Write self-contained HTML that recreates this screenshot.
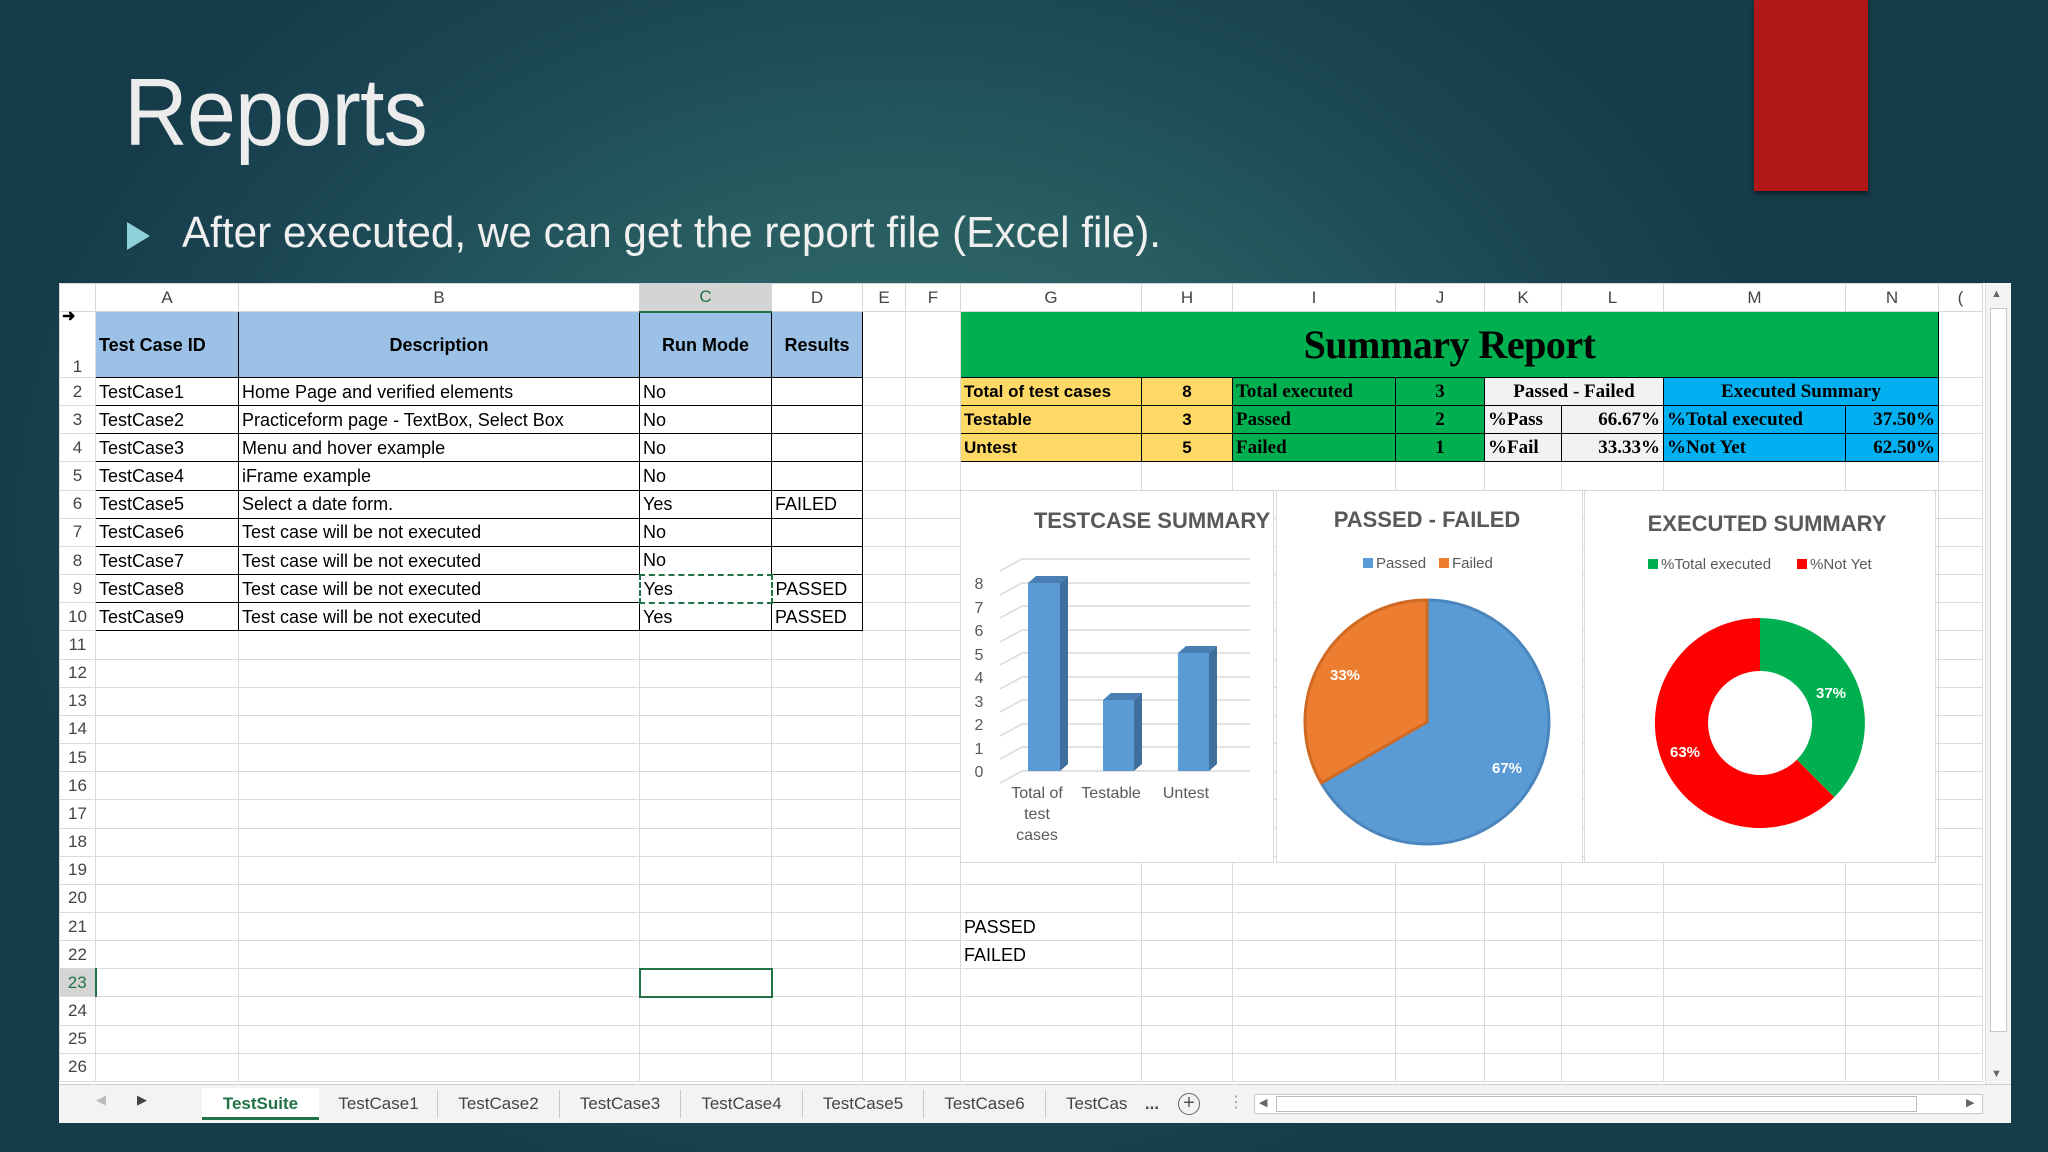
<!DOCTYPE html>
<html><head><meta charset="utf-8"><style>
*{margin:0;padding:0;box-sizing:border-box}
body{width:2048px;height:1152px;overflow:hidden;position:relative;font-family:"Liberation Sans",sans-serif;
background:radial-gradient(ellipse 900px 700px at 900px 520px,#33716c 0%,#285d61 45%,#1b4553 80%,#163c4a 100%);}
.abs{position:absolute}
#title{left:124px;top:58px;font-size:96px;color:#ececec;letter-spacing:-1px;transform:scaleX(.92);transform-origin:left}
#bul{left:182px;top:208px;font-size:44px;color:#f0f0f0;white-space:nowrap;transform:scaleX(.96);transform-origin:left}
#tri{left:127px;top:222px;width:0;height:0;border-left:23px solid #8dd0d8;border-top:14px solid transparent;border-bottom:14px solid transparent}
#red{left:1754px;top:0;width:114px;height:191px;background:#b11717;box-shadow:0 3px 4px rgba(0,0,0,.5)}
#sheet{left:59px;top:283px;width:1952px;height:840px;background:#fff}
table{border-collapse:collapse;table-layout:fixed;position:absolute;left:59px;top:283px}
td{border:1px solid #dadada;height:28.16px;font-size:18px;color:#000;white-space:nowrap;overflow:hidden;padding:0 3px;line-height:20px}
tr.h td{height:28px;color:#444;text-align:center;font-size:17px;background:#fff;border-color:#d6d6d6}
td.rn{color:#444;text-align:center;font-size:17px;padding:0}
tr.r1 td{height:66px}
.hd{background:#9bc2e6;font-weight:bold;border:1.5px solid #000!important}
.dt{border:1.5px solid #000!important}
.y{background:#ffd966;font-weight:bold;border:1.5px solid #000!important;font-size:17px}
.g{background:#00b050;border:1.5px solid #000!important;font-family:"Liberation Serif",serif;font-weight:bold;font-size:19px}
.gr{background:#f2f2f2;border:1.5px solid #000!important;font-family:"Liberation Serif",serif;font-weight:bold;font-size:19px}
.b{background:#00b0f0;border:1.5px solid #000!important;font-family:"Liberation Serif",serif;font-weight:bold;font-size:19px}
.c{text-align:center}.r{text-align:right}
.chart{position:absolute;background:#fff;border:1px solid #d9d9d9;top:490px;height:373px}
.tab{position:absolute;top:1088px;height:32px;font-size:17px;color:#444;line-height:32px;text-align:center}
.sep{position:absolute;top:1090px;width:1px;height:28px;background:#c8c8c8}
</style></head><body>
<div id="title" class="abs">Reports</div>
<div id="tri" class="abs"></div>
<div id="bul" class="abs">After executed, we can get the report file (Excel file).</div>
<div id="red" class="abs"></div>
<div id="sheet" class="abs"></div>
<table>
<colgroup><col style="width:36px"><col style="width:143px"><col style="width:401px"><col style="width:132px"><col style="width:91px"><col style="width:43px"><col style="width:55px"><col style="width:181px"><col style="width:91px"><col style="width:163px"><col style="width:89px"><col style="width:77px"><col style="width:102px"><col style="width:182px"><col style="width:93px"><col style="width:44px"></colgroup>
<tr class="h"><td></td><td>A</td><td>B</td><td style="background:#d4d4d4;border-bottom:2px solid #217346;color:#217346">C</td><td>D</td><td>E</td><td>F</td><td>G</td><td>H</td><td>I</td><td>J</td><td>K</td><td>L</td><td>M</td><td>N</td><td>(</td></tr>
<tr class="r1"><td class="rn" style="vertical-align:bottom">1</td><td class="hd">Test Case ID</td><td class="hd c">Description</td><td class="hd c">Run Mode</td><td class="hd c">Results</td><td></td><td></td><td colspan="8" class="g c" style="font-size:40px;letter-spacing:-.5px">Summary Report</td><td></td></tr>
<tr><td class="rn">2</td><td class="dt">TestCase1</td><td class="dt">Home Page and verified elements</td><td class="dt">No</td><td class="dt"></td><td></td><td></td><td class="y">Total of test cases</td><td class="y c">8</td><td class="g">Total executed</td><td class="g c">3</td><td colspan="2" class="gr c">Passed - Failed</td><td colspan="2" class="b c">Executed Summary</td><td></td></tr>
<tr><td class="rn">3</td><td class="dt">TestCase2</td><td class="dt">Practiceform page - TextBox, Select Box</td><td class="dt">No</td><td class="dt"></td><td></td><td></td><td class="y">Testable</td><td class="y c">3</td><td class="g">Passed</td><td class="g c">2</td><td class="gr">%Pass</td><td class="gr r">66.67%</td><td class="b">%Total executed</td><td class="b r">37.50%</td><td></td></tr>
<tr><td class="rn">4</td><td class="dt">TestCase3</td><td class="dt">Menu and hover example</td><td class="dt">No</td><td class="dt"></td><td></td><td></td><td class="y">Untest</td><td class="y c">5</td><td class="g">Failed</td><td class="g c">1</td><td class="gr">%Fail</td><td class="gr r">33.33%</td><td class="b">%Not Yet</td><td class="b r">62.50%</td><td></td></tr>
<tr><td class="rn">5</td><td class="dt">TestCase4</td><td class="dt">iFrame example</td><td class="dt">No</td><td class="dt"></td><td></td><td></td><td></td><td></td><td></td><td></td><td></td><td></td><td></td><td></td><td></td></tr>
<tr><td class="rn">6</td><td class="dt">TestCase5</td><td class="dt">Select a date form.</td><td class="dt">Yes</td><td class="dt">FAILED</td><td></td><td></td><td></td><td></td><td></td><td></td><td></td><td></td><td></td><td></td><td></td></tr>
<tr><td class="rn">7</td><td class="dt">TestCase6</td><td class="dt">Test case will be not executed</td><td class="dt">No</td><td class="dt"></td><td></td><td></td><td></td><td></td><td></td><td></td><td></td><td></td><td></td><td></td><td></td></tr>
<tr><td class="rn">8</td><td class="dt">TestCase7</td><td class="dt">Test case will be not executed</td><td class="dt">No</td><td class="dt"></td><td></td><td></td><td></td><td></td><td></td><td></td><td></td><td></td><td></td><td></td><td></td></tr>
<tr><td class="rn">9</td><td class="dt">TestCase8</td><td class="dt">Test case will be not executed</td><td class="dt" style="border:2px dashed #217346!important">Yes</td><td class="dt">PASSED</td><td></td><td></td><td></td><td></td><td></td><td></td><td></td><td></td><td></td><td></td><td></td></tr>
<tr><td class="rn">10</td><td class="dt">TestCase9</td><td class="dt">Test case will be not executed</td><td class="dt">Yes</td><td class="dt">PASSED</td><td></td><td></td><td></td><td></td><td></td><td></td><td></td><td></td><td></td><td></td><td></td></tr>
<tr><td class="rn">11</td><td></td><td></td><td></td><td></td><td></td><td></td><td></td><td></td><td></td><td></td><td></td><td></td><td></td><td></td><td></td></tr>
<tr><td class="rn">12</td><td></td><td></td><td></td><td></td><td></td><td></td><td></td><td></td><td></td><td></td><td></td><td></td><td></td><td></td><td></td></tr>
<tr><td class="rn">13</td><td></td><td></td><td></td><td></td><td></td><td></td><td></td><td></td><td></td><td></td><td></td><td></td><td></td><td></td><td></td></tr>
<tr><td class="rn">14</td><td></td><td></td><td></td><td></td><td></td><td></td><td></td><td></td><td></td><td></td><td></td><td></td><td></td><td></td><td></td></tr>
<tr><td class="rn">15</td><td></td><td></td><td></td><td></td><td></td><td></td><td></td><td></td><td></td><td></td><td></td><td></td><td></td><td></td><td></td></tr>
<tr><td class="rn">16</td><td></td><td></td><td></td><td></td><td></td><td></td><td></td><td></td><td></td><td></td><td></td><td></td><td></td><td></td><td></td></tr>
<tr><td class="rn">17</td><td></td><td></td><td></td><td></td><td></td><td></td><td></td><td></td><td></td><td></td><td></td><td></td><td></td><td></td><td></td></tr>
<tr><td class="rn">18</td><td></td><td></td><td></td><td></td><td></td><td></td><td></td><td></td><td></td><td></td><td></td><td></td><td></td><td></td><td></td></tr>
<tr><td class="rn">19</td><td></td><td></td><td></td><td></td><td></td><td></td><td></td><td></td><td></td><td></td><td></td><td></td><td></td><td></td><td></td></tr>
<tr><td class="rn">20</td><td></td><td></td><td></td><td></td><td></td><td></td><td></td><td></td><td></td><td></td><td></td><td></td><td></td><td></td><td></td></tr>
<tr><td class="rn">21</td><td></td><td></td><td></td><td></td><td></td><td></td><td>PASSED</td><td></td><td></td><td></td><td></td><td></td><td></td><td></td><td></td></tr>
<tr><td class="rn">22</td><td></td><td></td><td></td><td></td><td></td><td></td><td>FAILED</td><td></td><td></td><td></td><td></td><td></td><td></td><td></td><td></td></tr>
<tr><td class="rn" style="background:#d4d4d4;color:#217346;border-right:2px solid #217346">23</td><td></td><td></td><td style="border:2.5px solid #217346"></td><td></td><td></td><td></td><td></td><td></td><td></td><td></td><td></td><td></td><td></td><td></td><td></td></tr>
<tr><td class="rn">24</td><td></td><td></td><td></td><td></td><td></td><td></td><td></td><td></td><td></td><td></td><td></td><td></td><td></td><td></td><td></td></tr>
<tr><td class="rn">25</td><td></td><td></td><td></td><td></td><td></td><td></td><td></td><td></td><td></td><td></td><td></td><td></td><td></td><td></td><td></td></tr>
<tr><td class="rn">26</td><td></td><td></td><td></td><td></td><td></td><td></td><td></td><td></td><td></td><td></td><td></td><td></td><td></td><td></td><td></td></tr>
</table>
<div class="abs" style="left:62px;top:306px;font-size:16px;font-weight:bold">&#10140;</div>
<div class="abs" style="left:1985px;top:283px;width:26px;height:801px;background:#f3f3f3;border-left:1px solid #ddd"></div>
<div class="abs" style="left:1990px;top:308px;width:17px;height:724px;background:#fff;border:1px solid #c8c8c8"></div>
<div class="abs" style="left:1991px;top:288px;font-size:11px;color:#666">&#9650;</div>
<div class="abs" style="left:1991px;top:1068px;font-size:11px;color:#666">&#9660;</div>
<div class="chart" style="left:960px;width:314px"></div>
<div class="chart" style="left:1276px;width:307px"></div>
<div class="chart" style="left:1584px;width:352px"></div>
<svg class="abs" style="left:0;top:0" width="2048" height="1152" viewBox="0 0 2048 1152" font-family="Liberation Sans, sans-serif">
<g stroke="#d9d9d9" stroke-width="1.5" fill="none">
<path d="M1000 783 L1022 771 H1250 M1000 759 L1022 747 H1250 M1000 736 L1022 724 H1250 M1000 712 L1022 700 H1250 M1000 689 L1022 677 H1250 M1000 665 L1022 653 H1250 M1000 642 L1022 630 H1250 M1000 618 L1022 606 H1250 M1000 595 L1022 583 H1250 M1000 571 L1022 559 H1250"/>
</g>
<g fill="#595959" font-size="16" text-anchor="middle">
<text x="979" y="777">0</text><text x="979" y="754">1</text><text x="979" y="730">2</text><text x="979" y="707">3</text><text x="979" y="683">4</text><text x="979" y="660">5</text><text x="979" y="636">6</text><text x="979" y="613">7</text><text x="979" y="589">8</text>
<text x="1037" y="798">Total of</text><text x="1037" y="819">test</text><text x="1037" y="840">cases</text>
<text x="1111" y="798">Testable</text><text x="1186" y="798">Untest</text>
</g>
<g>
<rect x="1028" y="583" width="32" height="188" fill="#5b9bd5"/><path d="M1060 583 L1068 576 V764 L1060 771Z" fill="#3f6f9d"/><path d="M1028 583 L1036 576 H1068 L1060 583Z" fill="#4a7fb4"/>
<rect x="1103" y="700" width="31" height="71" fill="#5b9bd5"/><path d="M1134 700 L1142 693 V764 L1134 771Z" fill="#3f6f9d"/><path d="M1103 700 L1111 693 H1142 L1134 700Z" fill="#4a7fb4"/>
<rect x="1178" y="653" width="31" height="118" fill="#5b9bd5"/><path d="M1209 653 L1217 646 V764 L1209 771Z" fill="#3f6f9d"/><path d="M1178 653 L1186 646 H1217 L1209 653Z" fill="#4a7fb4"/>
</g>
<g fill="#595959" font-size="22" font-weight="bold" text-anchor="middle">
<text x="1152" y="528">TESTCASE SUMMARY</text>
<text x="1427" y="527">PASSED - FAILED</text>
<text x="1767" y="531">EXECUTED SUMMARY</text>
</g>
<g font-size="15" fill="#595959">
<rect x="1363" y="558" width="10" height="10" fill="#5b9bd5"/><text x="1376" y="568">Passed</text>
<rect x="1439" y="558" width="10" height="10" fill="#ed7d31"/><text x="1452" y="568">Failed</text>
<rect x="1648" y="559" width="10" height="10" fill="#00b050"/><text x="1661" y="569">%Total executed</text>
<rect x="1797" y="559" width="10" height="10" fill="#ff0000"/><text x="1810" y="569">%Not Yet</text>
</g>
<path d="M1427 722 L1427 600 A122 122 0 1 1 1321.3 783 Z" fill="#5b9bd5" stroke="#4a86bd" stroke-width="3"/>
<path d="M1427 722 L1321.3 783 A122 122 0 0 1 1427 600 Z" fill="#ed7d31" stroke="#d06a22" stroke-width="3"/>
<path d="M1760 618 A105 105 0 0 1 1834.2 797.2 L1796.8 759.8 A52 52 0 0 0 1760 671 Z" fill="#00b050"/>
<path d="M1834.2 797.2 A105 105 0 1 1 1760 618 L1760 671 A52 52 0 1 0 1796.8 759.8 Z" fill="#ff0000"/>
<g fill="#fff" font-size="15" font-weight="bold" text-anchor="middle">
<text x="1345" y="680">33%</text><text x="1507" y="773">67%</text><text x="1831" y="698">37%</text><text x="1685" y="757">63%</text>
</g>
</svg>
<div class="abs" style="left:59px;top:1084px;width:1952px;height:39px;background:#f3f3f3;border-top:1px solid #d0d0d0"></div>
<div class="abs" style="left:96px;top:1092px;font-size:13px;color:#bbb">&#9664;</div>
<div class="abs" style="left:137px;top:1092px;font-size:13px;color:#444">&#9654;</div>
<div class="tab" style="left:202px;width:117px;background:#fff;color:#217346;font-weight:bold;border-bottom:3px solid #217346">TestSuite</div>
<div class="tab" style="left:320px;width:117px">TestCase1</div><div class="sep" style="left:437px"></div>
<div class="tab" style="left:438px;width:121px">TestCase2</div><div class="sep" style="left:559px"></div>
<div class="tab" style="left:560px;width:120px">TestCase3</div><div class="sep" style="left:680px"></div>
<div class="tab" style="left:681px;width:121px">TestCase4</div><div class="sep" style="left:802px"></div>
<div class="tab" style="left:803px;width:120px">TestCase5</div><div class="sep" style="left:923px"></div>
<div class="tab" style="left:924px;width:121px">TestCase6</div><div class="sep" style="left:1045px"></div>
<div class="tab" style="left:1046px;width:100px;text-align:left;padding-left:20px">TestCas</div>
<div class="tab" style="left:1140px;width:24px;font-weight:bold">...</div>
<div class="abs" style="left:1178px;top:1093px;width:22px;height:22px;border:1.5px solid #666;border-radius:50%;font-size:20px;line-height:18px;text-align:center;color:#555">+</div>
<div class="abs" style="left:1228px;top:1092px;font-size:16px;color:#999">&#8942;</div>
<div class="abs" style="left:1254px;top:1094px;width:729px;height:20px;background:#fff;border:1px solid #c8c8c8"></div>
<div class="abs" style="left:1276px;top:1096px;width:641px;height:16px;background:#fff;border:1px solid #bbb"></div>
<div class="abs" style="left:1259px;top:1096px;font-size:11px;color:#666">&#9664;</div>
<div class="abs" style="left:1966px;top:1096px;font-size:11px;color:#666">&#9654;</div>
</body></html>
